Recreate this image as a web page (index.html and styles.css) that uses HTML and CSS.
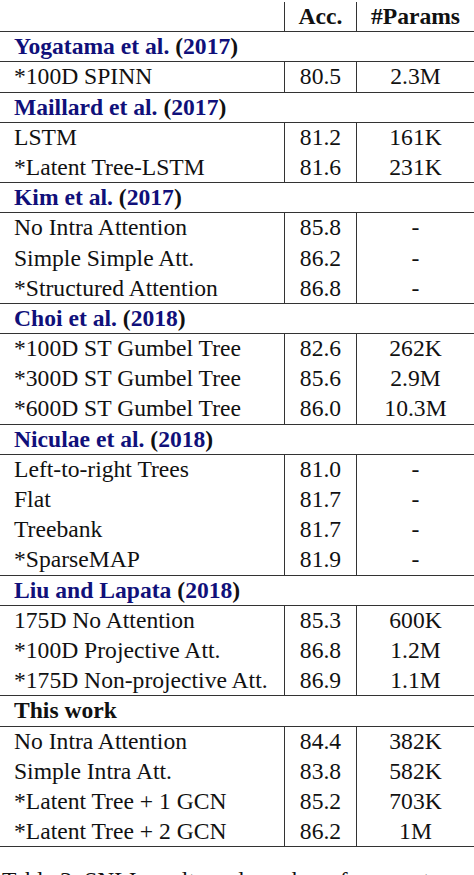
FILE: index.html
```html
<!DOCTYPE html>
<html>
<head>
<meta charset="utf-8">
<link rel="stylesheet" href="styles.css">
</head>
<body>
<div class="table">
  <div class="row head"><div class="c1"></div><div class="c2">Acc.</div><div class="c3">#Params</div></div>

  <div class="row group"><span class="cite">Yogatama et al.</span> (<span class="cite">2017</span>)</div>
  <div class="row last"><div class="c1">*100D SPINN</div><div class="c2">80.5</div><div class="c3">2.3M</div></div>

  <div class="row group"><span class="cite">Maillard et al.</span> (<span class="cite">2017</span>)</div>
  <div class="row"><div class="c1">LSTM</div><div class="c2">81.2</div><div class="c3">161K</div></div>
  <div class="row last"><div class="c1">*Latent Tree-LSTM</div><div class="c2">81.6</div><div class="c3">231K</div></div>

  <div class="row group"><span class="cite">Kim et al.</span> (<span class="cite">2017</span>)</div>
  <div class="row"><div class="c1">No Intra Attention</div><div class="c2">85.8</div><div class="c3">-</div></div>
  <div class="row"><div class="c1">Simple Simple Att.</div><div class="c2">86.2</div><div class="c3">-</div></div>
  <div class="row last"><div class="c1">*Structured Attention</div><div class="c2">86.8</div><div class="c3">-</div></div>

  <div class="row group"><span class="cite">Choi et al.</span> (<span class="cite">2018</span>)</div>
  <div class="row"><div class="c1">*100D ST Gumbel Tree</div><div class="c2">82.6</div><div class="c3">262K</div></div>
  <div class="row"><div class="c1">*300D ST Gumbel Tree</div><div class="c2">85.6</div><div class="c3">2.9M</div></div>
  <div class="row last"><div class="c1">*600D ST Gumbel Tree</div><div class="c2">86.0</div><div class="c3">10.3M</div></div>

  <div class="row group"><span class="cite">Niculae et al.</span> (<span class="cite">2018</span>)</div>
  <div class="row"><div class="c1">Left-to-right Trees</div><div class="c2">81.0</div><div class="c3">-</div></div>
  <div class="row"><div class="c1">Flat</div><div class="c2">81.7</div><div class="c3">-</div></div>
  <div class="row"><div class="c1">Treebank</div><div class="c2">81.7</div><div class="c3">-</div></div>
  <div class="row last"><div class="c1">*SparseMAP</div><div class="c2">81.9</div><div class="c3">-</div></div>

  <div class="row group"><span class="cite">Liu and Lapata</span> (<span class="cite">2018</span>)</div>
  <div class="row"><div class="c1">175D No Attention</div><div class="c2">85.3</div><div class="c3">600K</div></div>
  <div class="row"><div class="c1">*100D Projective Att.</div><div class="c2">86.8</div><div class="c3">1.2M</div></div>
  <div class="row last"><div class="c1">*175D Non-projective Att.</div><div class="c2">86.9</div><div class="c3">1.1M</div></div>

  <div class="row group bold">This work</div>
  <div class="row"><div class="c1">No Intra Attention</div><div class="c2">84.4</div><div class="c3">382K</div></div>
  <div class="row"><div class="c1">Simple Intra Att.</div><div class="c2">83.8</div><div class="c3">582K</div></div>
  <div class="row"><div class="c1">*Latent Tree + 1 GCN</div><div class="c2">85.2</div><div class="c3">703K</div></div>
  <div class="row last"><div class="c1">*Latent Tree + 2 GCN</div><div class="c2">86.2</div><div class="c3">1M</div></div>
</div>
<p class="caption">Table 3: SNLI results and number of parameters.</p>
</body>
</html>
```
FILE: styles.css
```css
html, body {
  margin: 0;
  padding: 0;
  background: #ffffff;
}
body {
  width: 474px;
  height: 875px;
  overflow: hidden;
  padding-top: 2px;
  box-sizing: border-box;
  font-family: "Liberation Serif", "Times New Roman", serif;
  font-size: 23.6px;
  color: #111111;
}
.table {
  width: 474px;
}
.row {
  display: grid;
  grid-template-columns: 284px 72px 118px;
  height: 30.2px;
  line-height: 28px;
  box-sizing: border-box;
  white-space: nowrap;
}
.row.head,
.row.group,
.row.last {
  border-bottom: 1px solid #333333;
}
.row.head {
  font-weight: bold;
}
.row.group {
  display: block;
  padding-left: 14px;
  font-weight: bold;
  color: #111111;
}
.cite {
  color: #10107a;
}
.c1 {
  padding-left: 14px;
}
.c2,
.c3 {
  text-align: center;
  border-left: 1px solid #333333;
}
.caption {
  margin: 19px 0 0 0;
  padding-left: 2px;
  line-height: 28px;
}
```
